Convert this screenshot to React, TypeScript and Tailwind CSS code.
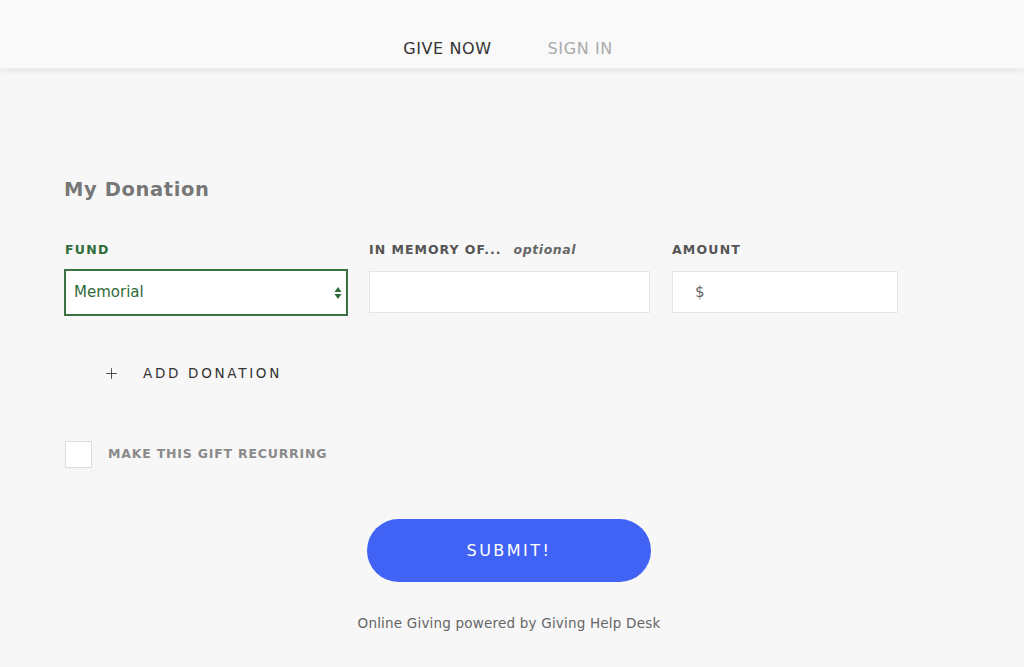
import { Plus } from "lucide-react";

export default function App() {
  return (
    <div className="min-h-[667px] bg-[#f7f7f7] font-['DejaVu_Sans',sans-serif] text-[#444]">
      {/* Header */}
      <header className="h-[69px] bg-[#f9f9f9] shadow-[0_2px_6px_rgba(0,0,0,0.08)] border-b border-[#eeeeee]">
        <nav className="flex h-full items-end justify-center gap-[56px] pb-[7px] pr-[8px] text-[16px] tracking-[0.6px]">
          <a className="text-[#333]">GIVE NOW</a>
          <a className="text-[#aaa]">SIGN IN</a>
        </nav>
      </header>

      <main className="pl-[64px] pt-[106px]">
        <h1 className="text-[19.5px] font-semibold tracking-[0.6px] text-[#777]">My Donation</h1>

        {/* Donation row */}
        <div className="mt-[37px] flex items-start">
          <div className="w-[284px]">
            <label className="block pl-[1px] text-[12.5px] font-bold tracking-[1.3px] text-[#2f6b39]">FUND</label>
            <div className="mt-[9px] flex h-[47px] items-center justify-between border-2 border-[#3a7244] bg-white pl-[8px] pr-[4px]">
              <span className="text-[15px] text-[#2f6b39]">Memorial</span>
              <svg width="8" height="14" viewBox="0 0 8 14" className="text-[#2f6b39]">
                <path d="M4 1 L7.5 6 L0.5 6 Z" fill="currentColor" />
                <path d="M4 13 L7.5 8 L0.5 8 Z" fill="currentColor" />
              </svg>
            </div>
          </div>
          <div className="ml-[21px] w-[281px]">
            <label className="flex items-baseline gap-[12px] text-[12.5px] font-bold tracking-[1px] text-[#555]">
              <span>IN MEMORY OF...</span>
              <span className="text-[12.5px] italic font-semibold tracking-[0.6px] text-[#666]">optional</span>
            </label>
            <div className="mt-[11px] h-[42px] border border-[#e6e6e6] bg-white" />
          </div>
          <div className="ml-[22px] w-[226px]">
            <label className="block text-[12.5px] font-bold tracking-[1.2px] text-[#555]">AMOUNT</label>
            <div className="mt-[11px] flex h-[42px] items-center border border-[#e6e6e6] bg-white pl-[22px]">
              <span className="text-[15px] text-[#666]">$</span>
            </div>
          </div>
        </div>

        {/* Add donation */}
        <button className="ml-[39px] mt-[47px] flex items-center gap-[23px] text-[13.5px] font-medium tracking-[2.7px] text-[#333]">
          <Plus size={17} strokeWidth={1.2} />
          ADD DONATION
        </button>

        {/* Recurring */}
        <label className="mt-[58px] flex items-center gap-[16px] pl-[1px]">
          <span className="h-[27px] w-[27px] border border-[#dcdcdc] bg-white" />
          <span className="text-[12.5px] font-bold tracking-[0.8px] text-[#8a8a8a]">MAKE THIS GIFT RECURRING</span>
        </label>
      </main>

      <div className="flex flex-col items-center pr-[6px] pt-[51px]">
        <button className="h-[63px] w-[284px] rounded-full bg-[#4163f5] text-[16px] font-medium tracking-[2.5px] text-white">
          SUBMIT!
        </button>
        <p className="mt-[31px] text-[13.5px] tracking-[0.2px] text-[#666]">Online Giving powered by Giving Help Desk</p>
      </div>
    </div>
  );
}
